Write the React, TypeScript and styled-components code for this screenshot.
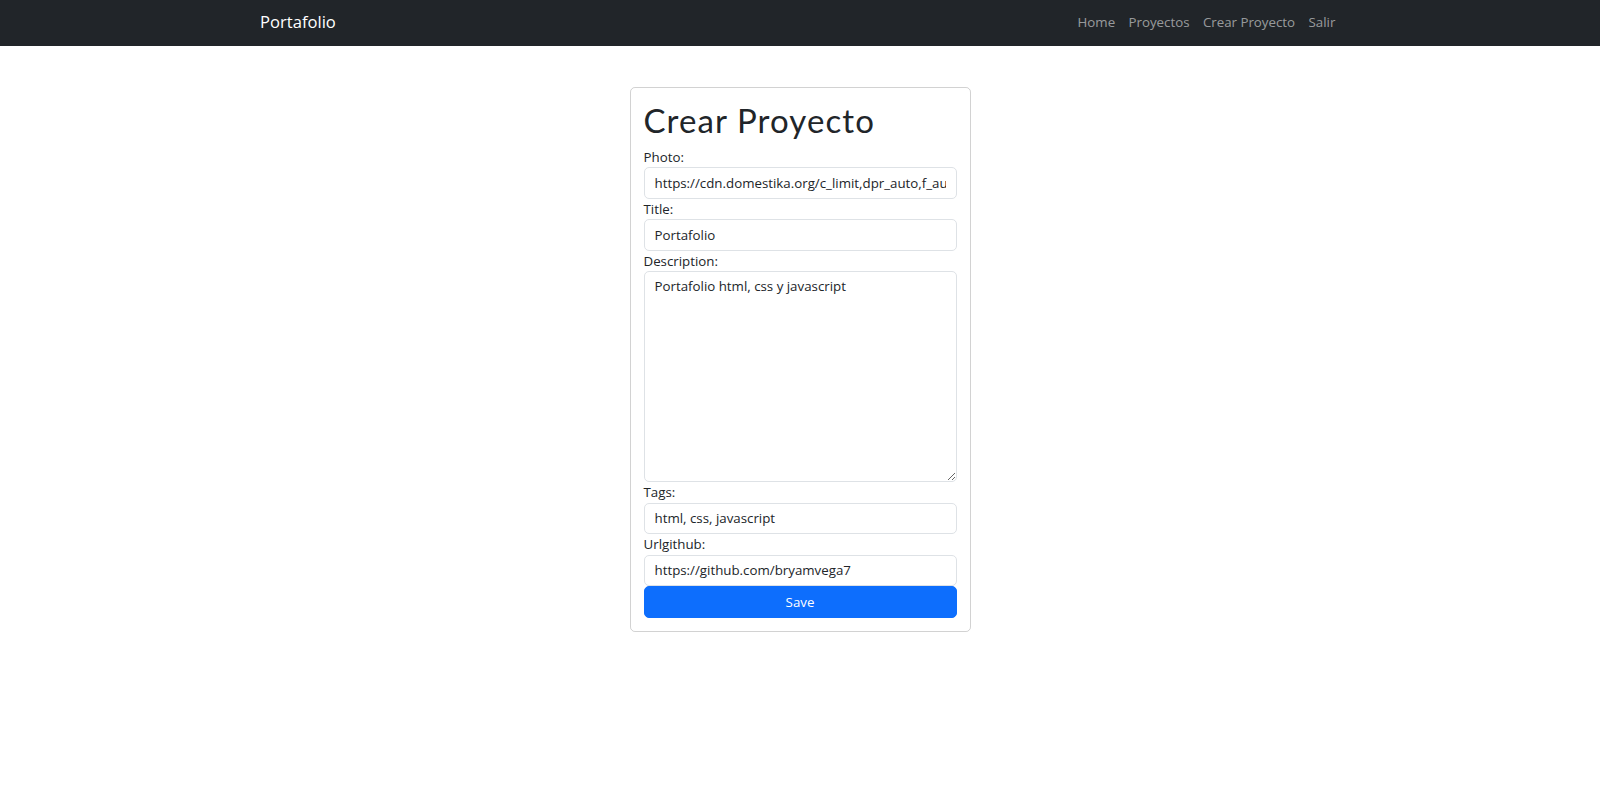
import React from "react";
import styled, { createGlobalStyle } from "styled-components";

const GlobalStyle = createGlobalStyle`
  html, body { margin: 0; padding: 0; background: #fff; }
  body {
    font-family: "Open Sans", "Liberation Sans", sans-serif;
    font-size: 13.3px;
    line-height: 1.5;
    color: #212529;
  }
  * { box-sizing: border-box; }
`;

const NavBar = styled.nav`
  background: #212529;
  height: 46px;
  width: 100%;
`;

const NavInner = styled.div`
  max-width: 1084px;
  height: 46px;
  margin: 0 auto;
  display: flex;
  align-items: center;
  justify-content: space-between;
`;

const Brand = styled.a`
  color: #fff;
  font-size: 16.6px;
  text-decoration: none;
  margin-top: -1px;
  margin-left: 2px;
`;

const NavLinks = styled.ul`
  list-style: none;
  display: flex;
  margin: 0;
  padding: 0;
`;

const NavLink = styled.a`
  display: block;
  padding: 6px 6.7px;
  color: rgba(255, 255, 255, 0.55);
  font-size: 13.3px;
  text-decoration: none;
  margin-top: -1px;
`;

const Main = styled.main`
  display: flex;
  justify-content: center;
  padding-top: 41px;
`;

const Card = styled.div`
  width: 341px;
  border: 1px solid rgba(0, 0, 0, 0.175);
  border-radius: 5px;
  padding: 13px;
`;

const Title = styled.h1`
  margin: 0 0 6.6px;
  font-family: "Lato", "Open Sans", sans-serif;
  font-weight: 400;
  font-size: 33px;
  line-height: 39.4px;
  letter-spacing: 1.1px;
  color: #212529;
`;

const Form = styled.form`
  display: flex;
  flex-direction: column;
`;

const Label = styled.label`
  display: block;
  font-size: 13.3px;
  line-height: 20px;
  height: 20.3px;
`;

const Field = styled.input`
  display: block;
  width: 100%;
  height: 31.7px;
  padding: 4px 10px;
  font-family: inherit;
  font-size: 13.3px;
  color: #212529;
  border: 1px solid #dee2e6;
  border-radius: 5px;
  background: #fff;
  outline: none;
`;

const Area = styled.textarea`
  display: block;
  width: 100%;
  height: 211px;
  padding: 5px 10px;
  font-family: inherit;
  font-size: 13.3px;
  line-height: 1.5;
  color: #212529;
  border: 1px solid #dee2e6;
  border-radius: 5px;
  background: #fff;
  outline: none;
  resize: vertical;
`;

const SaveButton = styled.button`
  display: block;
  width: 100%;
  height: 31.7px;
  border: 1px solid #0d6efd;
  border-radius: 5px;
  background: #0d6efd;
  color: #fff;
  font-family: inherit;
  font-size: 13.3px;
  cursor: pointer;
`;

export default function App() {
  return (
    <>
      <GlobalStyle />
      <NavBar>
        <NavInner>
          <Brand href="#">Portafolio</Brand>
          <NavLinks>
            <li><NavLink href="#">Home</NavLink></li>
            <li><NavLink href="#">Proyectos</NavLink></li>
            <li><NavLink href="#">Crear Proyecto</NavLink></li>
            <li><NavLink href="#">Salir</NavLink></li>
          </NavLinks>
        </NavInner>
      </NavBar>
      <Main>
        <Card>
          <Title>Crear Proyecto</Title>
          <Form onSubmit={(e) => e.preventDefault()}>
            <Label htmlFor="photo">Photo:</Label>
            <Field id="photo" defaultValue="https://cdn.domestika.org/c_limit,dpr_auto,f_auto,q_auto,w_820/v1/portfolio.jpg" />
            <Label htmlFor="title">Title:</Label>
            <Field id="title" defaultValue="Portafolio" />
            <Label htmlFor="description">Description:</Label>
            <Area id="description" defaultValue="Portafolio html, css y javascript" />
            <Label htmlFor="tags">Tags:</Label>
            <Field id="tags" defaultValue="html, css, javascript" />
            <Label htmlFor="urlgithub">Urlgithub:</Label>
            <Field id="urlgithub" defaultValue="https://github.com/bryamvega7" />
            <SaveButton type="submit">Save</SaveButton>
          </Form>
        </Card>
      </Main>
    </>
  );
}
